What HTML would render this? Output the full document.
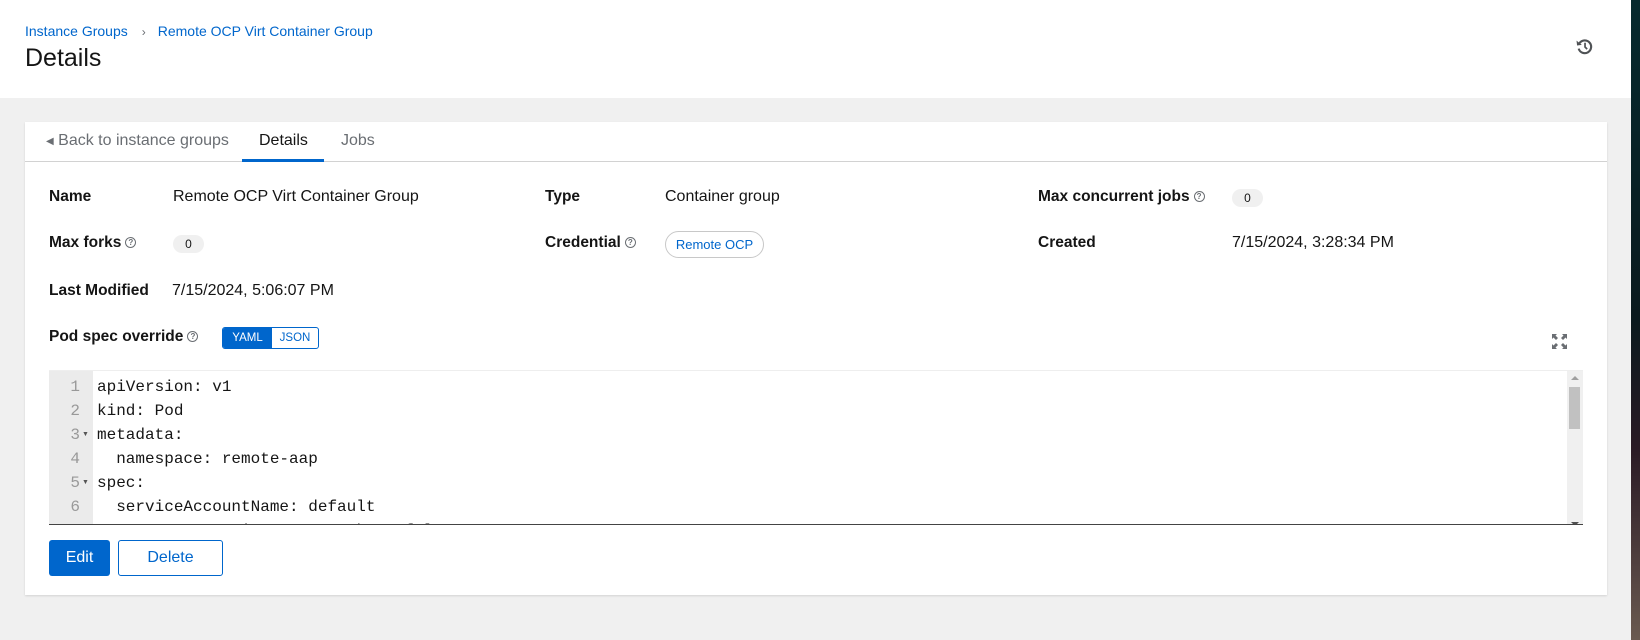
<!DOCTYPE html>
<html><head><style>
*{box-sizing:border-box;margin:0;padding:0}
body{width:1640px;height:640px;background:#f0f0f0;font-family:"Liberation Sans",sans-serif;font-size:15.5px;color:#151515;position:relative;overflow:hidden}
.abs{position:absolute;white-space:nowrap}
.hdr{position:absolute;left:0;top:0;width:1631px;height:98px;background:#fff}
.strip{position:absolute;left:1631px;top:0;width:9px;height:640px;background:linear-gradient(#062a2e,#0a1a1e 50%,#2a1a25 70%,#6a5a50)}
.card{position:absolute;left:25px;top:122px;width:1582px;height:473px;background:#fff;box-shadow:0 1px 2px rgba(0,0,0,.12)}
a{color:#06c;text-decoration:none}
.lbl{font-weight:bold}
.val{font-size:16px}
.help{display:inline-block;width:11px;height:11px;border:1.3px solid #6a6e73;border-radius:50%;font-size:8px;line-height:9px;text-align:center;color:#6a6e73;font-weight:bold;vertical-align:2px;margin-left:4px}
.badge{background:#f0f0f0;border-radius:10px;font-size:12px;width:31px;height:18px;text-align:center;line-height:18px}
.code{font-family:"Liberation Mono",monospace;font-size:16px;line-height:24px}
</style></head><body>
<div class="hdr"></div>
<div class="abs" style="left:25px;top:23px;font-size:14px"><a>Instance Groups</a><span style="color:#6a6e73;margin:0 12px 0 14px;font-size:12px">&#x203A;</span><a>Remote OCP Virt Container Group</a></div>
<div class="abs" style="left:25px;top:44px;font-size:25px">Details</div>
<svg class="abs" style="left:1576px;top:38px" width="17" height="17" viewBox="0 0 16 16"><path d="M3.2 5A6 6 0 1 1 2.5 10" fill="none" stroke="#4f5255" stroke-width="2"/><path d="M0.5 2.5L1 7 5.5 6.5Z" fill="#4f5255"/><path d="M8.5 4.5V8.5L10.5 10.5" fill="none" stroke="#4f5255" stroke-width="1.6"/></svg>
<div class="card"></div>
<div class="abs" style="left:25px;top:161px;width:1582px;height:1px;background:#d2d2d2"></div>
<div class="abs" style="left:46px;top:132px;color:#6a6e73;font-size:16px"><span style="font-size:10px;vertical-align:1px">&#9664;</span> Back to instance groups</div>
<div class="abs" style="left:259px;top:132px;font-size:16px">Details</div>
<div class="abs" style="left:242px;top:159px;width:82px;height:3px;background:#06c"></div>
<div class="abs" style="left:341px;top:132px;color:#6a6e73;font-size:16px">Jobs</div>

<div class="abs lbl" style="left:49px;top:188px">Name</div>
<div class="abs val" style="left:173px;top:188px">Remote OCP Virt Container Group</div>
<div class="abs lbl" style="left:545px;top:188px">Type</div>
<div class="abs val" style="left:665px;top:188px">Container group</div>
<div class="abs lbl" style="left:1038px;top:188px">Max concurrent jobs<span class="help">?</span></div>
<div class="abs badge" style="left:1232px;top:189px">0</div>

<div class="abs lbl" style="left:49px;top:234px">Max forks<span class="help">?</span></div>
<div class="abs badge" style="left:173px;top:235px">0</div>
<div class="abs lbl" style="left:545px;top:234px">Credential<span class="help">?</span></div>
<div class="abs" style="left:665px;top:231px;width:99px;height:27px;border:1px solid #c8c8c8;border-radius:14px;font-size:13px;line-height:25px;text-align:center;color:#06c">Remote OCP</div>
<div class="abs lbl" style="left:1038px;top:234px">Created</div>
<div class="abs val" style="left:1232px;top:234px">7/15/2024, 3:28:34 PM</div>

<div class="abs lbl" style="left:49px;top:282px">Last Modified</div>
<div class="abs val" style="left:172px;top:282px">7/15/2024, 5:06:07 PM</div>

<div class="abs lbl" style="left:49px;top:328px">Pod spec override<span class="help">?</span></div>
<div class="abs" style="left:222px;top:327px;width:97px;height:22px;border:1px solid #06c;border-radius:3px;font-size:11.5px;display:flex;overflow:hidden">
<div style="width:49px;background:#06c;color:#fff;text-align:center;line-height:20px">YAML</div><div style="flex:1;color:#06c;text-align:center;line-height:20px">JSON</div></div>
<svg class="abs" style="left:1552px;top:334px" width="15" height="15" viewBox="0 0 15 15" fill="#6a6e73"><path d="M0 0h5L3.5 1.5 6 4 4 6 1.5 3.5 0 5Z"/><path d="M15 0v5L13.5 3.5 11 6 9 4 11.5 1.5 10 0Z"/><path d="M0 15v-5l1.5 1.5L4 9l2 2-2.5 2.5L5 15Z"/><path d="M15 15h-5l1.5-1.5L9 11l2-2 2.5 2.5L15 10Z"/></svg>

<div class="abs" style="left:49px;top:370px;width:1534px;height:155px;background:#fff;border-top:1px solid #eee;border-bottom:1px solid #444;overflow:hidden">
<div style="position:absolute;left:0;top:0;width:44px;height:160px;background:#ebebeb"></div>
<div style="position:absolute;right:0;top:0;width:16px;height:160px;background:#f0f0f0"><div style="position:absolute;left:2px;top:16px;width:11px;height:42px;background:#c1c1c1"></div><div style="position:absolute;left:4px;top:5px;border:4px solid transparent;border-bottom-color:#a0a0a0;border-top:0"></div><div style="position:absolute;left:4px;bottom:5px;border:4px solid transparent;border-top-color:#505050;border-bottom:0"></div></div>
<div class="code" style="position:absolute;left:0;top:4px;width:31px;text-align:right;color:#999">1<br>2<br>3<br>4<br>5<br>6<br>7</div>
<div style="position:absolute;left:33px;top:4px;font-size:7px;line-height:24px;color:#555">&nbsp;<br>&nbsp;<br>&#9660;<br>&nbsp;<br>&#9660;</div>
<div class="code" style="position:absolute;left:48px;top:4px;white-space:pre">apiVersion: v1
kind: Pod
metadata:
  namespace: remote-aap
spec:
  serviceAccountName: default
  automountServiceAccountToken: false</div>
</div>

<div class="abs" style="left:49px;top:540px;width:61px;height:36px;background:#06c;color:#fff;border-radius:3px;text-align:center;line-height:36px;font-size:16px">Edit</div>
<div class="abs" style="left:118px;top:540px;width:105px;height:36px;border:1px solid #06c;color:#06c;border-radius:3px;text-align:center;line-height:34px;font-size:16px">Delete</div>
<div class="strip"></div>
</body></html>
